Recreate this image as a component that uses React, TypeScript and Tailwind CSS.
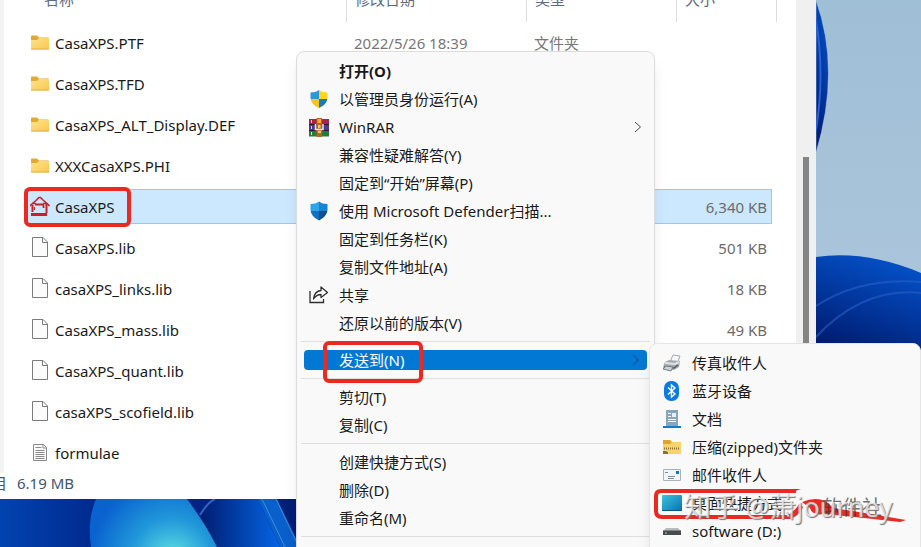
import React from 'react';

const FONT = "font-['Noto_Sans','Noto_Sans_CJK_SC',sans-serif]";

interface FileRow {
  name: string;
  icon: 'folder' | 'app' | 'file' | 'text';
  date?: string;
  type?: string;
  size?: string;
}

const files: FileRow[] = [
  { name: 'CasaXPS.PTF', icon: 'folder', date: '2022/5/26 18:39', type: '文件夹' },
  { name: 'CasaXPS.TFD', icon: 'folder' },
  { name: 'CasaXPS_ALT_Display.DEF', icon: 'folder' },
  { name: 'XXXCasaXPS.PHI', icon: 'folder' },
  { name: 'CasaXPS', icon: 'app', size: '6,340 KB' },
  { name: 'CasaXPS.lib', icon: 'file', size: '501 KB' },
  { name: 'casaXPS_links.lib', icon: 'file', size: '18 KB' },
  { name: 'CasaXPS_mass.lib', icon: 'file', size: '49 KB' },
  { name: 'CasaXPS_quant.lib', icon: 'file' },
  { name: 'casaXPS_scofield.lib', icon: 'file' },
  { name: 'formulae', icon: 'text' },
];

const FolderIcon = () => (
  <svg width="18" height="15" viewBox="0 0 18 15">
    <defs>
      <linearGradient id="folder" x1="0" y1="0" x2="1" y2="1">
        <stop offset="0" stopColor="#ffe38f" />
        <stop offset="1" stopColor="#f8c84c" />
      </linearGradient>
    </defs>
    <path d="M0 1.5Q0 .5 1 .5H6L8 2.5H17Q18 2.5 18 3.5V7H0Z" fill="#e3a92d" />
    <path d="M0 5H6L8 3H18V13.5Q18 14.5 17 14.5H1Q0 14.5 0 13.5Z" fill="url(#folder)" />
    <path d="M0 14H18" stroke="#dfb152" />
  </svg>
);

const FileIcon = () => (
  <svg width="18" height="21" viewBox="0 0 18 21" fill="none" stroke="#7b7b7b">
    <path d="M1.5.5H12L16.5 5V19.5H1.5Z" fill="#fbfbfb" />
    <path d="M11.5.5V5.5H16.5" />
  </svg>
);

const TextIcon = () => (
  <svg width="18" height="21" viewBox="0 0 18 21" fill="none" stroke="#8b8b8b">
    <path d="M2.5 2.5H12.5L15.5 5.5V18.5H2.5Z" fill="#fafafa" />
    <path d="M12 2.5V6H15.5M4.5 5.5H10.5M4.5 8.5H13.5M4.5 10.5H13.5M4.5 12.5H13.5M4.5 14.5H13.5M4.5 16.5H13.5" />
  </svg>
);

const HouseIcon = () => (
  <svg width="20" height="21" viewBox="0 0 20 21" fill="none" stroke="#c7202b">
    <path d="M0 10L2 8L6 4.500L9 1.500H10.500L13 4L17 7.500L19.500 10" strokeWidth="1.600" />
    <path d="M2 7.500H6M13 7.500H17" strokeWidth="1.500" />
    <path d="M2.500 9V16M16.500 8V17" strokeWidth="2" />
    <path d="M5 8.500H14M13.500 9V12" strokeWidth="1.800" />
    <path d="M4.500 11V14" />
    <path d="M1 18.500H17" strokeWidth="3" />
  </svg>
);

const fileIcons = { folder: FolderIcon, app: HouseIcon, file: FileIcon, text: TextIcon };

const UacShield = () => (
  <svg width="20" height="20" viewBox="0 0 20 20">
    <clipPath id="uac"><path d="M10 1Q13 3.500 18.500 3.500V9Q18 15.500 10 19Q2 15.500 1.500 9V3.500Q7 3.500 10 1Z" /></clipPath>
    <g clipPath="url(#uac)">
      <path d="M0 0H10V10H0Z" fill="#2b96d8" />
      <path d="M10 0H20V10H10Z" fill="#fbd51e" />
      <path d="M0 10H10V20H0Z" fill="#f5c51b" />
      <path d="M10 10H20V20H10Z" fill="#1b79c0" />
    </g>
  </svg>
);

const WinRarIcon = () => (
  <svg width="20" height="19" viewBox="0 0 20 19">
    <path d="M0 1H20V6.500H0Z" fill="#a3254a" />
    <path d="M0 6.500H20V12.500H0Z" fill="#433d94" />
    <path d="M0 12.500H20V18.500H0Z" fill="#267a3d" />
    <path d="M0 6.500H20M0 12.500H20" stroke="#2b1830" />
    <path d="M2.500 2V5M2.500 8V11M2.500 14V17" stroke="#e9d9c5" />
    <path d="M7.500 0H13V19H7.500Z" fill="#b8641f" />
    <path d="M8.500 1H12V5H8.500Z" fill="#f7a927" />
    <path d="M6.500 6V11.500H14V6" fill="none" stroke="#eee8dc" strokeWidth="1.500" />
    <path d="M9 7H11.500V10H9ZM9 13H12V15H9Z" fill="#f4c84c" />
  </svg>
);

const DefenderIcon = () => (
  <svg width="20" height="20" viewBox="0 0 20 20">
    <clipPath id="defender"><path d="M10 .5Q13 3 18.500 3V9Q18 15.500 10 19.500Q2 15.500 1.500 9V3Q7 3 10 .5Z" /></clipPath>
    <g clipPath="url(#defender)">
      <path d="M0 0H10V10H0Z" fill="#2da5e6" />
      <path d="M10 0H20V10H10Z" fill="#1684d2" />
      <path d="M0 10H10V20H0Z" fill="#1171c0" />
      <path d="M10 10H20V20H10Z" fill="#124f96" />
    </g>
  </svg>
);

const ShareIcon = () => (
  <svg width="20" height="20" viewBox="0 0 20 20" fill="none" stroke="#303030" strokeWidth="1.300">
    <path d="M1 6V17.500H14.500V14" />
    <path d="M4.500 14Q5.500 6 12 5.500V2L18.500 7.500L12 12.500V9.500Q7.500 9.500 4.500 14Z" strokeLinejoin="round" />
  </svg>
);

const PrinterIcon = () => (
  <svg width="20" height="20" viewBox="0 0 20 20">
    <path d="M8 9L11 2L18 3L15 11Z" fill="#f5f7f8" stroke="#a2a8ad" />
    <path d="M3 9L7 7L18 8L17 14L12 17L1 15L2 11Z" fill="#a3a9af" />
    <path d="M3 10L13 11L17 9" stroke="#dfe3e6" strokeWidth="2" fill="none" />
    <path d="M2 14L12 15L16 12" stroke="#545b62" strokeWidth="1.500" fill="none" />
    <path d="M4 13L11 14L9 18L1 16Z" fill="#cbd0d4" stroke="#767d83" />
  </svg>
);

const BluetoothIcon = () => (
  <svg width="20" height="20" viewBox="0 0 20 20">
    <rect x="2" width="15" height="20" rx="7" fill="#0a7be2" />
    <path d="M6 6.500L13 13L9.500 16V4L13 7L6 13.500" fill="none" stroke="#fff" strokeWidth="1.400" />
  </svg>
);

const DocumentIcon = () => (
  <svg width="20" height="20" viewBox="0 0 20 20">
    <path d="M4 1H16V18H4Z" fill="#86a5c1" />
    <path d="M6 4.500H9M6 7.500H9M6 10.500H14M6 12.500H14" stroke="#fff" />
    <path d="M10 4H14V8H10Z" fill="#e3f1fa" />
    <path d="M1 18H19" stroke="#187bc8" strokeWidth="2" />
  </svg>
);

const ZipIcon = () => (
  <svg width="20" height="20" viewBox="0 0 20 20">
    <path d="M1 3H8L10 5H19V9H1Z" fill="#dda52b" />
    <path d="M1 7H8L10 5H19V17H1Z" fill="#f8d36c" />
    <path d="M2 11.500H18" stroke="#8b7033" strokeDasharray="1 1" strokeWidth="2" />
    <path d="M1 14H6V17H1Z" fill="#8b7033" />
    <path d="M3 13L7 15" stroke="#d9dfe2" />
  </svg>
);

const MailIcon = () => (
  <svg width="20" height="20" viewBox="0 0 20 20">
    <path d="M1.500 4.500H18.500V15.500H1.500Z" fill="#f3f6f8" stroke="#aab2b8" />
    <path d="M14 6H17V9H14Z" fill="#1874bd" />
    <path d="M3 7.500H6M6 11.500H13M6 13.500H12" stroke="#7d8e9d" />
  </svg>
);

const DesktopIcon = () => (
  <svg width="20" height="20" viewBox="0 0 20 20">
    <defs>
      <linearGradient id="desk" x1="0" y1="0" x2="1" y2="1">
        <stop offset="0" stopColor="#3bc4dc" />
        <stop offset="1" stopColor="#0871b5" />
      </linearGradient>
    </defs>
    <rect y="2" width="20" height="16" rx="1" fill="url(#desk)" />
    <path d="M0 17.500H20" stroke="#075785" />
  </svg>
);

const DriveIcon = () => (
  <svg width="20" height="20" viewBox="0 0 20 20">
    <path d="M4 7H16L19 10H1Z" fill="#b9bbbd" />
    <path d="M1 9.500H19V14H1Z" fill="#484b4e" />
    <path d="M3 12H5" stroke="#7ce0a2" />
  </svg>
);

const Chevron = ({ className }: { className: string }) => (
  <svg width="8" height="12" viewBox="0 0 8 12" fill="none" stroke="currentColor" className={className}>
    <path d="M1 1L6.500 6L1 11" />
  </svg>
);

interface MenuEntry {
  label: string;
  icon?: React.FC;
  bold?: boolean;
  arrow?: boolean;
}

const topItems: MenuEntry[] = [
  { label: '打开(O)', bold: true },
  { label: '以管理员身份运行(A)', icon: UacShield },
  { label: 'WinRAR', icon: WinRarIcon, arrow: true },
  { label: '兼容性疑难解答(Y)' },
  { label: '固定到“开始”屏幕(P)' },
  { label: '使用 Microsoft Defender扫描...', icon: DefenderIcon },
  { label: '固定到任务栏(K)' },
  { label: '复制文件地址(A)' },
  { label: '共享', icon: ShareIcon },
  { label: '还原以前的版本(V)' },
];
const editItems: MenuEntry[] = [{ label: '剪切(T)' }, { label: '复制(C)' }];
const manageItems: MenuEntry[] = [{ label: '创建快捷方式(S)' }, { label: '删除(D)' }, { label: '重命名(M)' }];
const sendToItems: MenuEntry[] = [
  { label: '传真收件人', icon: PrinterIcon },
  { label: '蓝牙设备', icon: BluetoothIcon },
  { label: '文档', icon: DocumentIcon },
  { label: '压缩(zipped)文件夹', icon: ZipIcon },
  { label: '邮件收件人', icon: MailIcon },
  { label: '桌面快捷方式', icon: DesktopIcon },
  { label: 'software (D:)', icon: DriveIcon },
];

const MenuItem = ({ label, icon: Icon, bold, arrow }: MenuEntry) => (
  <button className={`flex h-7 w-full items-center px-3 text-left ${bold ? 'font-bold' : ''}`}>
    <span className="mr-2.5 flex w-5 shrink-0 justify-center">{Icon && <Icon />}</span>
    <span className="grow whitespace-nowrap">{label}</span>
    {arrow && <Chevron className="text-[#444]" />}
  </button>
);

const Wallpaper = () => (
  <svg className="absolute inset-0 h-full w-full" viewBox="0 0 921 547" preserveAspectRatio="none">
    <defs>
      <linearGradient id="sky" x1="0" y1="0" x2="0" y2="1">
        <stop offset="0" stopColor="#9fbfd7" />
        <stop offset="1" stopColor="#b5cade" />
      </linearGradient>
      <linearGradient id="petal" x1=".6" y1="0" x2=".2" y2="1">
        <stop offset="0" stopColor="#0450c6" />
        <stop offset="1" stopColor="#001b70" />
      </linearGradient>
      <linearGradient id="base" x1="0" y1="0" x2="1" y2="0">
        <stop offset="0" stopColor="#0243b0" />
        <stop offset=".3" stopColor="#002b90" />
        <stop offset="1" stopColor="#001e75" />
      </linearGradient>
      <radialGradient id="glow" cx="172" cy="560" r="82" gradientUnits="userSpaceOnUse">
        <stop offset="0" stopColor="#64e5e1" />
        <stop offset=".5" stopColor="#2199da" />
        <stop offset="1" stopColor="#0a62cf" />
      </radialGradient>
      <linearGradient id="band" x1="0" y1="0" x2="1" y2="0">
        <stop offset="0" stopColor="#001d70" />
        <stop offset="1" stopColor="#0564e4" />
      </linearGradient>
    </defs>
    <path d="M0 0H921V547H0Z" fill="url(#sky)" />
    <path d="M816 0Q841 70 816 153Z" fill="url(#petal)" stroke="#c7d8e8" strokeOpacity=".5" />
    <path d="M816 20Q825 75 816 130" fill="none" stroke="#2861da" strokeWidth="2" />
    <path d="M816 257Q866 250 921 273V350H816Z" fill="url(#petal)" />
    <path d="M816 306Q860 277 921 282M816 337Q863 287 921 293" fill="none" stroke="#2860c9" strokeOpacity=".6" strokeWidth="2" />
    <path d="M0 499H300V547H0Z" fill="url(#base)" />
    <path d="M96 499Q87 520 91 547H218Q202 519 187 499Z" fill="url(#glow)" />
    <path d="M200 515Q208 502 215 499H258L280 547H217Z" fill="url(#band)" />
    <path d="M200 515Q208 502 215 499" fill="none" stroke="#2d64c8" strokeWidth="2" />
    <path d="M258 499H277L300 547H280Z" fill="#0a5fcb" />
    <path d="M262 499L285 547M276 499L299 547" stroke="#3b8fe0" />
  </svg>
);

const cell = 'flex h-[35px] items-center border-y';

export default function App() {
  return (
    <div className={`relative h-screen overflow-hidden text-[15px] leading-5 text-[#1a1a1a] ${FONT}`}>
      <Wallpaper />

      {/* Explorer window */}
      <main className="relative mr-[105px] flex flex-col bg-white">
        <div className="flex">
          <div className="grow border-l-4 border-[#f3f3f3]">
            <table className="w-full table-fixed border-separate border-spacing-0 text-left">
              <colgroup>
                <col className="w-5" />
                <col />
                <col className="w-[180px]" />
                <col className="w-[150px]" />
                <col className="w-[100px]" />
                <col className="w-[19px]" />
              </colgroup>
              <thead className="text-[#5c6b80]">
                <tr className="h-[22px]">
                  <th className="p-0" />
                  <th className="border-r border-[#dedede] p-0 font-normal"><div className="-mt-[22px] ml-5 h-5">名称</div></th>
                  <th className="border-r border-[#dedede] p-0 font-normal"><div className="-mt-[22px] ml-2 h-5">修改日期</div></th>
                  <th className="border-r border-[#dedede] p-0 font-normal"><div className="-mt-[22px] ml-2 h-5">类型</div></th>
                  <th className="border-r border-[#dedede] p-0 font-normal"><div className="-mt-[22px] ml-2 h-5">大小</div></th>
                  <th className="p-0" />
                </tr>
              </thead>
              <tbody>
                {files.map((file) => {
                  const Icon = fileIcons[file.icon];
                  const tint = file.icon === 'app' ? 'border-[#9ecae8] bg-[#cce8ff]' : 'border-transparent';
                  return (
                    <tr key={file.name} className="h-[41px]">
                      <td className="p-0" />
                      <td className="p-0">
                        <div className={`${cell} ${tint} pl-1.5`}>
                          <span className="mr-[5px] flex w-5 shrink-0 justify-center"><Icon /></span>
                          {file.name}
                        </div>
                      </td>
                      <td className="p-0 text-[#777]">
                        <div className={`${cell} ${tint} pl-[7px]`}>{file.date}</div>
                      </td>
                      <td className="p-0 text-[#777]">
                        <div className={`${cell} ${tint} pl-[7px]`}>{file.type}</div>
                      </td>
                      <td className="p-0 text-[#6b6b6b]">
                        <div className={`${cell} ${tint} mr-[5px] justify-end border-r pr-1`}>{file.size}</div>
                      </td>
                      <td className="p-0" />
                    </tr>
                  );
                })}
              </tbody>
            </table>
          </div>
          <div className="flex w-5 shrink-0 justify-center bg-[#f0f0f0] pt-[157px]">
            <div className="w-1.5 bg-[#858585]" />
          </div>
        </div>
        <footer className="flex h-[26px] items-start gap-2.5 overflow-hidden text-[#40566f]">
          <span className="-ml-2">目</span>
          <span>6.19 MB</span>
        </footer>
      </main>
      <div className="absolute left-6 top-[187px] h-10 w-[107px] rounded-md border-4 border-[#ea2a22]" />

      {/* Context menu */}
      <nav className="absolute left-[296px] top-[51px] w-[359px] rounded-t-lg border border-[#dcdcdc] bg-[#f9f9f9] pb-8 pt-[5px] shadow-lg">
        {topItems.map((item) => <MenuItem key={item.label} {...item} />)}
        <hr className="mx-1 mb-2 mt-1 border-[#dedede]" />
        <button className="mx-[7px] flex h-5 w-[343px] items-center rounded bg-[#0078d4] pl-[35px] pr-[7px] text-left text-white">
          <span className="grow">发送到(N)</span>
          <Chevron className="text-[#123f70]" />
        </button>
        <hr className="mx-1 mb-1 mt-2 border-[#dedede]" />
        {editItems.map((item) => <MenuItem key={item.label} {...item} />)}
        <hr className="mx-1 my-1 border-[#dedede]" />
        {manageItems.map((item) => <MenuItem key={item.label} {...item} />)}
        <hr className="mx-1 my-1 border-[#dedede]" />
      </nav>
      <div className="absolute left-[323px] top-[341px] h-[42px] w-[100px] rounded-md border-4 border-[#ea2a22]" />

      {/* Send-to submenu */}
      <nav className="absolute left-[649px] right-0 top-[343px] rounded-t-lg border border-[#e5e5e5] bg-[#f9f9f9] pb-8 pt-[5px] shadow-lg">
        {sendToItems.map((item) => <MenuItem key={item.label} {...item} />)}
      </nav>
      <svg className="absolute left-[650px] top-[484px]" width="271" height="40" viewBox="0 0 271 40" fill="none" stroke="#ea2a22">
        <path d="M146 7H11Q6 7 6 12V27Q6 33 12 33H142" strokeWidth="4" />
        <path d="M138 5H151L140 9ZM138 31Q146 26 149 20L153 23Q149 32 140 35ZM152 18Q172 10 183 24L215 29L256 36L250 38L205 33L174 30Q162 32 160 24Z" fill="#ea2a22" stroke="none" />
      </svg>
      {/* Watermark */}
      <div className="absolute left-[822px] top-[496px] whitespace-nowrap text-[20px] leading-6 text-[#333]/70">软件社</div>
      <div className="absolute left-[684px] top-[491px] whitespace-nowrap text-[27px] leading-8 text-white/70 [text-shadow:1px_1px_1px_#777]">知乎 @萧journey</div>
    </div>
  );
}
